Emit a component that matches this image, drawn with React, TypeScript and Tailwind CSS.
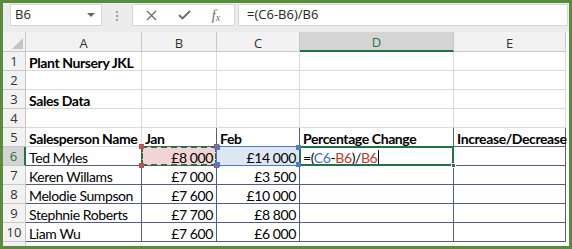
import React from 'react'

type Row = {
  n: number
  a?: string
  b?: string
  c?: string
  d?: string
  e?: string
  bold?: boolean
  table?: boolean
}

const rows: Row[] = [
  { n: 1, a: 'Plant Nursery JKL', bold: true },
  { n: 2 },
  { n: 3, a: 'Sales Data', bold: true },
  { n: 4 },
  { n: 5, a: 'Salesperson Name', b: 'Jan', c: 'Feb', d: 'Percentage Change', e: 'Increase/Decrease', bold: true, table: true },
  { n: 6, a: 'Ted Myles', b: '£8 000', c: '£14 000', table: true },
  { n: 7, a: 'Keren Willams', b: '£7 000', c: '£3 500', table: true },
  { n: 8, a: 'Melodie Sumpson', b: '£7 600', c: '£10 000', table: true },
  { n: 9, a: 'Stephnie Roberts', b: '£7 700', c: '£8 800', table: true },
  { n: 10, a: 'Liam Wu', b: '£7 600', c: '£6 000', table: true },
]

const cols = ['A', 'B', 'C', 'D', 'E']

function Cell({ children, right, table, className = '' }: { children?: React.ReactNode; right?: boolean; table?: boolean; className?: string }) {
  return (
    <div
      className={`relative flex h-[19px] items-center overflow-visible whitespace-nowrap border-b border-r px-[3px] pt-[2px] ${
        table ? 'border-[#52607c]' : 'border-[#dadada]'
      } ${right ? 'justify-end' : ''} ${className}`}
    >
      {children}
    </div>
  )
}

function Corner({ pos, color }: { pos: string; color: string }) {
  return <span className={`absolute z-20 h-[5px] w-[5px] ${pos} ${color}`} />
}

export default function App() {
  return (
    <div className="h-[249px] w-[572px] overflow-hidden bg-[#5a8a3c] p-[3px]">
      <div className="flex h-[243px] w-[566px] flex-col overflow-hidden bg-[#ececec]">
        {/* formula bar */}
        <div className="flex h-[30px] items-start pt-[1px] font-['Open_Sans',sans-serif] text-[13px] text-[#262626]">
          <div className="ml-[7px] flex h-[22px] w-[92px] items-center justify-between border border-[#d6d6d6] bg-white pl-[4px] pr-[6px]">
            <span>B6</span>
            <svg width="8" height="5" viewBox="0 0 8 5">
              <path d="M0 0 L8 0 L4 4 Z" fill="#666" />
            </svg>
          </div>
          <div className="flex w-[30px] flex-col items-center gap-[2px] pt-[7px]">
            <span className="h-[2px] w-[2px] bg-[#a0a0a0]" />
            <span className="h-[2px] w-[2px] bg-[#a0a0a0]" />
            <span className="h-[2px] w-[2px] bg-[#a0a0a0]" />
          </div>
          <div className="flex h-[22px] w-[103px] items-center border border-[#d6d6d6] bg-white">
            <div className="flex w-[36px] justify-center">
              <svg width="11" height="11" viewBox="0 0 11 11">
                <path d="M1 1 L10 10 M10 1 L1 10" stroke="#6b6b6b" strokeWidth="1.3" />
              </svg>
            </div>
            <div className="flex w-[30px] justify-center">
              <svg width="13" height="10" viewBox="0 0 13 10">
                <path d="M1 5 L4.5 8.5 L12 1" stroke="#6b6b6b" strokeWidth="1.8" fill="none" />
              </svg>
            </div>
            <div className="flex w-[34px] items-baseline justify-center font-['Liberation_Serif',serif] text-[14px] italic text-[#6b6b6b]">
              f<span className="translate-y-[1px] text-[10px]">x</span>
            </div>
          </div>
          <div className="ml-[3px] flex h-[22px] w-[330px] items-center border border-[#d6d6d6] bg-white pl-[8px]">
            =(C6-B6)/B6
          </div>
        </div>

        {/* sheet */}
        <div className="grid grid-cols-[23px_116px_75px_83px_154px_112px] bg-white">
          {/* column header */}
          <div className="relative h-[20px] border-b border-r border-[#c8c8c8] bg-[#f2f2f2]">
            <svg className="absolute bottom-[2px] right-[2px]" width="11" height="11" viewBox="0 0 11 11">
              <path d="M11 0 L11 11 L0 11 Z" fill="#c4c4c4" />
            </svg>
          </div>
          {cols.map((c) => (
            <div
              key={c}
              className={`flex h-[20px] items-center justify-center border-r pt-[4px] font-['Open_Sans',sans-serif] text-[13px] ${
                c === 'D'
                  ? 'border-b-2 border-b-[#217346] border-r-[#c8c8c8] bg-[#d4d4d4] text-[#217346]'
                  : 'border-b border-[#c8c8c8] bg-[#f2f2f2] text-[#333]'
              }`}
            >
              {c}
            </div>
          ))}

          {rows.map((r) => (
            <React.Fragment key={r.n}>
              <div
                className={`flex h-[19px] items-center justify-center border-b pt-[2px] font-['Open_Sans',sans-serif] text-[13px] ${
                  r.n === 6
                    ? 'border-r-2 border-[#c8c8c8] border-r-[#217346] bg-[#d4d4d4] text-[#217346]'
                    : 'border-r border-[#c8c8c8] bg-[#f2f2f2] text-[#333]'
                }`}
              >
                {r.n}
              </div>
              <div className={`contents font-['Lato',sans-serif] text-[14px] tracking-[-0.4px] text-black`}>
                <Cell table={r.table && r.n > 5} className={r.bold ? 'font-bold' : ''}>
                  {r.a}
                </Cell>
                <Cell right={r.n > 5} table={r.table} className={`${r.bold ? 'font-bold' : ''} ${r.n === 6 ? 'bg-[#f2d4d4]' : ''}`}>
                  {r.b}
                  {r.n === 6 && (
                    <>
                      <span className="pointer-events-none absolute inset-[-1px] z-10 border-2 border-dashed border-[#2d6e3e]" />
                      <Corner pos="-left-[3px] -top-[3px]" color="bg-[#c0504d]" />
                      <Corner pos="-right-[3px] -top-[3px]" color="bg-[#c0504d]" />
                      <Corner pos="-left-[3px] -bottom-[3px]" color="bg-[#c0504d]" />
                      <Corner pos="-right-[3px] -bottom-[3px]" color="bg-[#c0504d]" />
                    </>
                  )}
                </Cell>
                <Cell right={r.n > 5} table={r.table} className={`${r.bold ? 'font-bold' : ''} ${r.n === 6 ? 'bg-[#dde7f4]' : ''}`}>
                  {r.c}
                  {r.n === 6 && (
                    <>
                      <span className="pointer-events-none absolute inset-[-1px] z-10 border border-[#4a7bd0]" />
                      <Corner pos="-left-[2px] -top-[2px]" color="bg-[#4a7bd0]" />
                      <Corner pos="-right-[2px] -top-[2px]" color="bg-[#4a7bd0]" />
                      <Corner pos="-left-[2px] -bottom-[2px]" color="bg-[#4a7bd0]" />
                      <Corner pos="-right-[2px] -bottom-[2px]" color="bg-[#4a7bd0]" />
                    </>
                  )}
                </Cell>
                <Cell table={r.table} className={r.bold ? 'font-bold' : ''}>
                  {r.d}
                  {r.n === 6 && (
                    <>
                      <span>
                        =(<span className="text-[#3c6fc2]">C6</span>-<span className="text-[#c0392b]">B6</span>)/
                        <span className="text-[#c0392b]">B6</span>
                      </span>
                      <span className="ml-[1px] h-[15px] w-[1px] bg-black" />
                      <span className="pointer-events-none absolute inset-[-1px] z-10 border-2 border-[#217346]" />
                      <span className="absolute -bottom-[3px] -right-[3px] z-20 h-[5px] w-[5px] border border-white bg-[#217346]" />
                    </>
                  )}
                </Cell>
                <Cell table={r.table} className={r.bold ? 'font-bold' : ''}>
                  {r.e}
                </Cell>
              </div>
            </React.Fragment>
          ))}
          <div className="h-[4px] border-r border-[#c8c8c8] bg-[#f2f2f2]" />
          <div className="col-span-5 h-[4px]" />
        </div>
      </div>
    </div>
  )
}
